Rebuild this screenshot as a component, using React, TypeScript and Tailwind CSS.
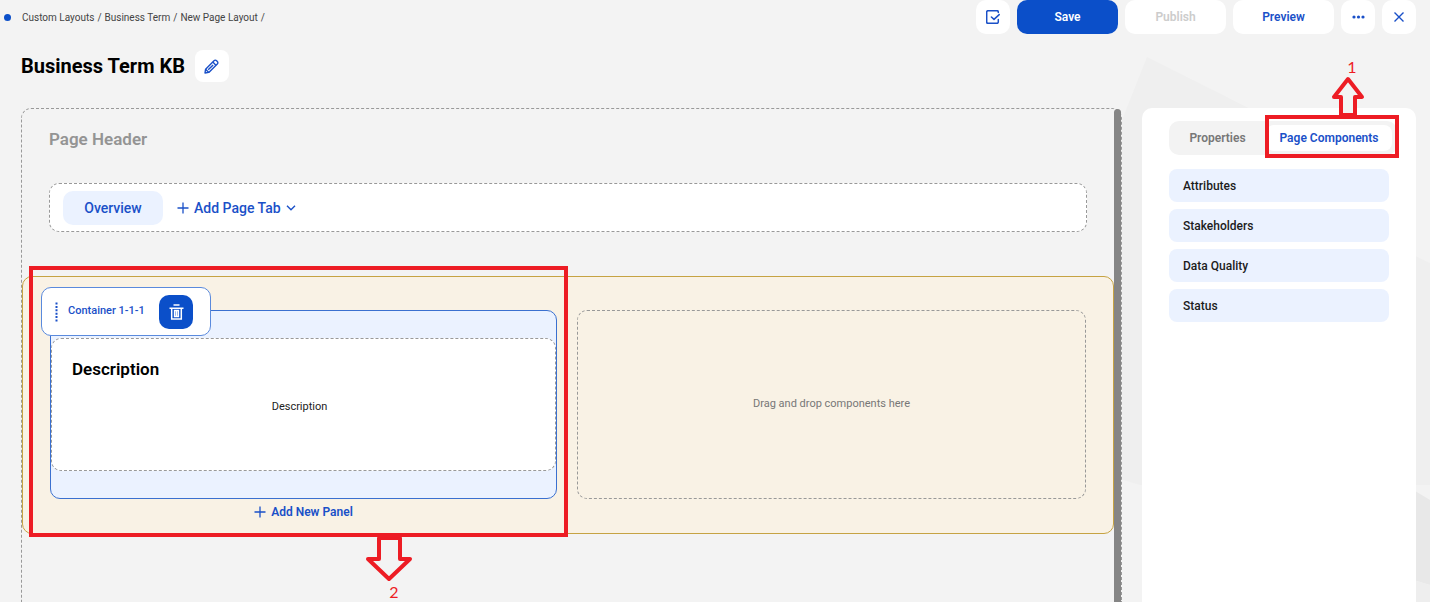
import React from 'react';

const components = ['Attributes', 'Stakeholders', 'Data Quality', 'Status'];

const CheckSquareIcon = () => (
  <svg width="14" height="14" viewBox="0 0 14 14" fill="none" stroke="currentColor" strokeWidth="1.5" strokeLinecap="round" strokeLinejoin="round">
    <path d="M12.3 2.6V1.9a1.2 1.2 0 0 0-1.2-1.2H1.9A1.2 1.2 0 0 0 .7 1.9v10.2a1.2 1.2 0 0 0 1.2 1.2h9.2a1.2 1.2 0 0 0 1.2-1.2V9.4" />
    <path d="M5.4 7 8 9.4l5.2-4.8" />
  </svg>
);

const PencilIcon = () => (
  <svg width="15" height="15" viewBox="0 0 15 15" fill="none" stroke="currentColor" strokeWidth="1.4" strokeLinejoin="round">
    <path d="M1 14 1.6 10.2 10 1.7a1.8 1.8 0 0 1 2.6 0l.7.7a1.8 1.8 0 0 1 0 2.6L4.8 13.4z" />
    <path d="M8.8 3.1 11.9 6.2M1.6 10.2l3.2 3.2M4.2 10.8l4.9-4.9" />
  </svg>
);

const TrashIcon = () => (
  <svg width="15" height="16" viewBox="0 0 15 16" fill="none" stroke="currentColor" strokeWidth="1.5">
    <path d="M4.5 1h6M.5 4.2h14M2.7 4.2V15h9.6V4.2M5.6 6.6v6h3.8v-6zM7.5 6.6v6" />
  </svg>
);

const PlusIcon = () => (
  <svg width="12" height="12" viewBox="0 0 12 12" fill="none" stroke="currentColor" strokeWidth="1.3">
    <path d="M6 .5v11M.5 6h11" />
  </svg>
);

const Backdrop = () => (
  <svg className="absolute right-0 top-0" width="310" height="602" viewBox="0 0 310 602">
    <path d="M27 57 0 125v354l20 6h290V263l-90-42V154z" fill="#efefef" />
    <path d="M290 488l20 12v85l-20-6z" fill="#e8e8e8" />
    <path d="M290 579l20 6v17h-20z" fill="#eeeeee" />
  </svg>
);

const Header = () => (
  <header className="relative">
    <div className="flex items-center justify-between pl-1 pr-[14px]">
      <div className="flex items-center gap-[11px]">
        <span className="size-[7px] rounded-full bg-[#0b4fc9]" />
        <nav className="flex gap-[3px] text-[10px] text-[#444]">
          <a href="#layouts">Custom Layouts</a> /
          <a href="#term">Business Term</a> /
          <a href="#page">New Page Layout</a> /
        </nav>
      </div>
      <div className="flex gap-[7px] text-xs font-semibold text-[#1a50c8]">
        <button aria-label="Validate" className="flex size-[34px] items-center justify-center rounded-[10px] bg-white"><CheckSquareIcon /></button>
        <button className="h-[34px] w-[101px] rounded-[10px] bg-[#0b4fc9] text-white">Save</button>
        <button disabled className="h-[34px] w-[101px] rounded-[10px] bg-white text-[#ccc]">Publish</button>
        <button className="h-[34px] w-[101px] rounded-[10px] bg-white">Preview</button>
        <button aria-label="More" className="flex size-[34px] items-center justify-center rounded-[10px] bg-white">
          <svg width="13" height="4" viewBox="0 0 13 4" fill="currentColor">
            <circle cx="2" cy="2" r="1.6" /><circle cx="6.5" cy="2" r="1.6" /><circle cx="11" cy="2" r="1.6" />
          </svg>
        </button>
        <button aria-label="Close" className="flex size-[34px] items-center justify-center rounded-[10px] bg-white">
          <svg width="10" height="10" viewBox="0 0 10 10" fill="none" stroke="currentColor" strokeWidth="1.4">
            <path d="M.5.5l9 9M9.5.5l-9 9" />
          </svg>
        </button>
      </div>
    </div>
    <div className="flex items-center gap-[10px] pb-[26px] pl-[21px] pt-4">
      <h1 className="text-xl font-bold text-black">Business Term KB</h1>
      <button aria-label="Rename" className="flex h-8 w-[34px] items-center justify-center rounded-lg bg-white text-[#1a50c8]"><PencilIcon /></button>
    </div>
  </header>
);

const ContainerPanel = () => (
  <div className="relative flex-1">
    <div className="h-[189px] rounded-[10px] border border-[#3a70d0] bg-[#ebf2ff] pt-[27px]">
      <div className="h-[133px] rounded-[10px] border border-dashed border-[#999] bg-white pl-5 pr-7 pt-5">
        <h3 className="text-[17px] leading-5 font-semibold text-black">Description</h3>
        <p className="mt-5 text-center text-[11px] leading-4 text-[#222]">Description</p>
      </div>
    </div>
    <button className="mx-auto mt-[5px] flex items-center gap-[5px] text-xs font-semibold text-[#1a50c8]">
      <PlusIcon /> Add New Panel
    </button>

    {/* floating handle of the selected container */}
    <div className="absolute -left-[9px] -top-[23px] flex h-[49px] w-[170px] items-center rounded-[10px] border border-[#5a8add] bg-white pl-[13px] text-[#1a50c8]">
      <svg width="3" height="20" viewBox="0 0 3 20">
        <path d="M1.5 .5v19" stroke="currentColor" strokeWidth="2" strokeDasharray="2 1.4" />
      </svg>
      <span className="ml-[10px] text-[11px] font-medium">Container 1-1-1</span>
      <button aria-label="Delete" className="mr-[17px] ml-auto flex size-[34px] items-center justify-center rounded-[10px] bg-[#0b4fc9] text-white"><TrashIcon /></button>
    </div>

    <div className="pointer-events-none absolute -bottom-[17px] -left-[21px] -right-[11px] -top-[44px] border-4 border-[#ed1c24]">
      <div className="absolute left-[332px] top-full flex flex-col items-center font-[Lato,sans-serif] text-base leading-5 text-[#ed1c24]">
        <svg width="48" height="49" viewBox="0 0 48 49" fill="#f3f3f3" stroke="currentColor" strokeWidth="4" strokeLinejoin="round">
          <path d="M14 5v21H3l21 20 21-20H35V5z" />
        </svg>
        <span className="pl-[10px]">2</span>
      </div>
    </div>
  </div>
);

const Canvas = () => (
  <main className="flex min-w-0 flex-1 rounded-t-[10px] border border-b-0 border-dashed border-[#999] bg-[#f3f3f3]">
    <div className="min-w-0 flex-1">
      <div className="px-[27px] pt-5">
        <h2 className="text-[17px] leading-5 font-semibold text-[#949494]">Page Header</h2>
        <div className="mt-[34px] flex h-[49px] items-center gap-[14px] rounded-[10px] border border-dashed border-[#999] bg-white px-[13px] text-sm font-medium text-[#1a50c8]">
          <button className="h-[34px] w-[100px] rounded-[10px] bg-[#ebf2ff]">Overview</button>
          <button className="flex items-center gap-[5px]">
            <PlusIcon /> Add Page Tab
            <svg width="10" height="6" viewBox="0 0 10 6" fill="none" stroke="currentColor" strokeWidth="1.4">
              <path d="M1 .8l4 4 4-4" />
            </svg>
          </button>
        </div>
      </div>
      <section className="mt-11 flex h-[258px] items-start gap-5 rounded-[10px] border border-[#c6a343] bg-[#f9f2e5] px-[27px] pt-[33px]">
        <ContainerPanel />
        <div className="flex h-[189px] flex-1 items-center justify-center rounded-[10px] border border-dashed border-[#999] text-[11px] text-[#777]">
          Drag and drop components here
        </div>
      </section>
    </div>
    <div className="w-[7px] rounded-t bg-[#858585]" />
  </main>
);

const Sidebar = () => (
  <aside className="relative w-[274px] rounded-t-[10px] bg-white px-[27px] pt-[13px] text-xs">
    <div className="relative -mr-2 flex h-[34px] items-center rounded-[10px] bg-[#f3f3f3] font-semibold">
      <button className="flex-1 text-[#777]">Properties</button>
      <button className="mr-[5px] h-[26px] w-[126px] rounded-lg bg-white text-[#1a50c8]">Page Components</button>
      <div className="pointer-events-none absolute -right-[2px] -top-[6px] h-[43px] w-[134px] border-4 border-[#ed1c24]">
        <div className="absolute bottom-full left-[62px] flex flex-col items-center font-[Lato,sans-serif] text-base leading-4 font-normal text-[#ed1c24]">
          <span className="pl-2">1</span>
          <svg width="34" height="44" viewBox="0 0 34 44" fill="#f3f3f3" stroke="currentColor" strokeWidth="4" strokeLinejoin="round">
            <path d="M10 40V22H3L17 4l14 18h-7v18z" />
          </svg>
        </div>
      </div>
    </div>
    <ul className="mt-[14px] flex flex-col gap-[7px] font-medium text-[#1c1c1c]">
      {components.map((name) => (
        <li key={name} className="flex h-[33px] items-center rounded-lg bg-[#ebf2ff] px-[14px]">{name}</li>
      ))}
    </ul>
  </aside>
);

export default function App() {
  return (
    <div className="relative flex h-screen flex-col overflow-hidden bg-[#f3f3f3] font-[Roboto,sans-serif]">
      <Backdrop />
      <Header />
      <div className="relative flex flex-1 gap-5 pl-[21px] pr-[14px]">
        <Canvas />
        <Sidebar />
      </div>
    </div>
  );
}
